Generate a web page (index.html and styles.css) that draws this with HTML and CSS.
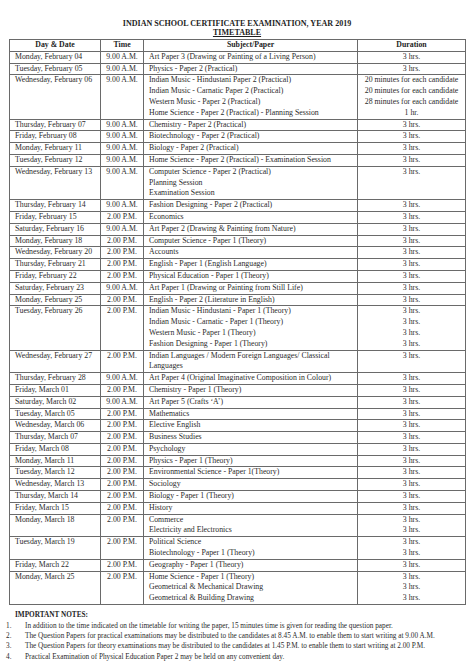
FILE: index.html
```html
<!DOCTYPE html>
<html>
<head>
<meta charset="utf-8">
<link rel="stylesheet" href="styles.css">
</head>
<body>
<div class="page">
  <div class="title">INDIAN SCHOOL CERTIFICATE EXAMINATION, YEAR 2019</div>
  <div class="subtitle"><span>TIMETABLE</span></div>
  <table class="tt">
    <colgroup><col class="c1"><col class="c2"><col class="c3"><col class="c4"></colgroup>
    <thead>
      <tr><th>Day &amp; Date</th><th>Time</th><th>Subject/Paper</th><th>Duration</th></tr>
    </thead>
    <tbody>
      <tr><td>Monday, February 04</td><td class="t">9.00 A.M.</td><td>Art Paper 3 (Drawing or Painting of a Living Person)</td><td class="d">3 hrs.</td></tr>
      <tr><td>Tuesday, February 05</td><td class="t">9.00 A.M.</td><td>Physics - Paper 2 (Practical)</td><td class="d">3 hrs.</td></tr>
      <tr><td>Wednesday, February 06</td><td class="t">9.00 A.M.</td><td><div>Indian Music - Hindustani Paper 2 (Practical)</div><div>Indian Music - Carnatic Paper 2 (Practical)</div><div>Western Music - Paper 2 (Practical)</div><div>Home Science - Paper 2 (Practical) - Planning Session</div></td><td class="d"><div>20 minutes for each candidate</div><div>20 minutes for each candidate</div><div>28 minutes for each candidate</div><div>1 hr.</div></td></tr>
      <tr><td>Thursday, February 07</td><td class="t">9.00 A.M.</td><td>Chemistry - Paper 2 (Practical)</td><td class="d">3 hrs.</td></tr>
      <tr><td>Friday, February 08</td><td class="t">9.00 A.M.</td><td>Biotechnology - Paper 2 (Practical)</td><td class="d">3 hrs.</td></tr>
      <tr><td>Monday, February 11</td><td class="t">9.00 A.M.</td><td>Biology - Paper 2 (Practical)</td><td class="d">3 hrs.</td></tr>
      <tr><td>Tuesday, February 12</td><td class="t">9.00 A.M.</td><td>Home Science - Paper 2 (Practical) - Examination Session</td><td class="d">3 hrs.</td></tr>
      <tr><td>Wednesday, February 13</td><td class="t">9.00 A.M.</td><td><div>Computer Science - Paper 2 (Practical)</div><div>Planning Session</div><div>Examination Session</div></td><td class="d">3 hrs.</td></tr>
      <tr><td>Thursday, February 14</td><td class="t">9.00 A.M.</td><td>Fashion Designing - Paper 2 (Practical)</td><td class="d">3 hrs.</td></tr>
      <tr><td>Friday, February 15</td><td class="t">2.00 P.M.</td><td>Economics</td><td class="d">3 hrs.</td></tr>
      <tr><td>Saturday, February 16</td><td class="t">9.00 A.M.</td><td>Art Paper 2 (Drawing &amp; Painting from Nature)</td><td class="d">3 hrs.</td></tr>
      <tr><td>Monday, February 18</td><td class="t">2.00 P.M.</td><td>Computer Science - Paper 1 (Theory)</td><td class="d">3 hrs.</td></tr>
      <tr><td>Wednesday, February 20</td><td class="t">2.00 P.M.</td><td>Accounts</td><td class="d">3 hrs.</td></tr>
      <tr><td>Thursday, February 21</td><td class="t">2.00 P.M.</td><td>English - Paper 1 (English Language)</td><td class="d">3 hrs.</td></tr>
      <tr><td>Friday, February 22</td><td class="t">2.00 P.M.</td><td>Physical Education - Paper 1 (Theory)</td><td class="d">3 hrs.</td></tr>
      <tr><td>Saturday, February 23</td><td class="t">9.00 A.M.</td><td>Art Paper 1 (Drawing or Painting from Still Life)</td><td class="d">3 hrs.</td></tr>
      <tr><td>Monday, February 25</td><td class="t">2.00 P.M.</td><td>English - Paper 2 (Literature in English)</td><td class="d">3 hrs.</td></tr>
      <tr><td>Tuesday, February 26</td><td class="t">2.00 P.M.</td><td><div>Indian Music - Hindustani - Paper 1 (Theory)</div><div>Indian Music - Carnatic - Paper 1 (Theory)</div><div>Western Music - Paper 1 (Theory)</div><div>Fashion Designing - Paper 1 (Theory)</div></td><td class="d"><div>3 hrs.</div><div>3 hrs.</div><div>3 hrs.</div><div>3 hrs.</div></td></tr>
      <tr><td>Wednesday, February 27</td><td class="t">2.00 P.M.</td><td><div>Indian Languages / Modern Foreign Languages/ Classical</div><div>Languages</div></td><td class="d">3 hrs.</td></tr>
      <tr><td>Thursday, February 28</td><td class="t">9.00 A.M.</td><td>Art Paper 4 (Original Imaginative Composition in Colour)</td><td class="d">3 hrs.</td></tr>
      <tr><td>Friday, March 01</td><td class="t">2.00 P.M.</td><td>Chemistry - Paper 1 (Theory)</td><td class="d">3 hrs.</td></tr>
      <tr><td>Saturday, March 02</td><td class="t">9.00 A.M.</td><td>Art Paper 5 (Crafts ‘A’)</td><td class="d">3 hrs.</td></tr>
      <tr><td>Tuesday, March 05</td><td class="t">2.00 P.M.</td><td>Mathematics</td><td class="d">3 hrs.</td></tr>
      <tr><td>Wednesday, March 06</td><td class="t">2.00 P.M.</td><td>Elective English</td><td class="d">3 hrs.</td></tr>
      <tr><td>Thursday, March 07</td><td class="t">2.00 P.M.</td><td>Business Studies</td><td class="d">3 hrs.</td></tr>
      <tr><td>Friday, March 08</td><td class="t">2.00 P.M.</td><td>Psychology</td><td class="d">3 hrs.</td></tr>
      <tr><td>Monday, March 11</td><td class="t">2.00 P.M.</td><td>Physics - Paper 1 (Theory)</td><td class="d">3 hrs.</td></tr>
      <tr><td>Tuesday, March 12</td><td class="t">2.00 P.M.</td><td>Environmental Science - Paper 1(Theory)</td><td class="d">3 hrs.</td></tr>
      <tr><td>Wednesday, March 13</td><td class="t">2.00 P.M.</td><td>Sociology</td><td class="d">3 hrs.</td></tr>
      <tr><td>Thursday, March 14</td><td class="t">2.00 P.M.</td><td>Biology - Paper 1 (Theory)</td><td class="d">3 hrs.</td></tr>
      <tr><td>Friday, March 15</td><td class="t">2.00 P.M.</td><td>History</td><td class="d">3 hrs.</td></tr>
      <tr><td>Monday, March 18</td><td class="t">2.00 P.M.</td><td><div>Commerce</div><div>Electricity and Electronics</div></td><td class="d"><div>3 hrs.</div><div>3 hrs.</div></td></tr>
      <tr><td>Tuesday, March 19</td><td class="t">2.00 P.M.</td><td><div>Political Science</div><div>Biotechnology - Paper 1 (Theory)</div></td><td class="d"><div>3 hrs.</div><div>3 hrs.</div></td></tr>
      <tr><td>Friday, March 22</td><td class="t">2.00 P.M.</td><td>Geography - Paper 1 (Theory)</td><td class="d">3 hrs.</td></tr>
      <tr><td>Monday, March 25</td><td class="t">2.00 P.M.</td><td><div>Home Science - Paper 1 (Theory)</div><div>Geometrical &amp; Mechanical Drawing</div><div>Geometrical &amp; Building Drawing</div></td><td class="d"><div>3 hrs.</div><div>3 hrs.</div><div>3 hrs.</div></td></tr>
    </tbody>
  </table>
  <div class="notes">
    <div class="notes-title">IMPORTANT NOTES:</div>
    <div class="note"><span class="num">1.</span><span>In addition to the time indicated on the timetable for writing the paper, 15 minutes time is given for reading the question paper.</span></div>
    <div class="note"><span class="num">2.</span><span>The Question Papers for practical examinations may be distributed to the candidates at 8.45 A.M. to enable them to start writing at 9.00 A.M.</span></div>
    <div class="note"><span class="num">3.</span><span>The Question Papers for theory examinations may be distributed to the candidates at 1.45 P.M. to enable them to start writing at 2.00 P.M.</span></div>
    <div class="note"><span class="num">4.</span><span>Practical Examination of Physical Education Paper 2 may be held on any convenient day.</span></div>
  </div>
</div>
</body>
</html>
```

FILE: styles.css
```css
html, body {
  margin: 0;
  padding: 0;
  background: #ffffff;
}
body {
  font-family: "Liberation Serif", "Times New Roman", serif;
  color: #2b2b2b;
}
.page {
  width: 474px;
  padding: 19px 9px 0;
  box-sizing: border-box;
}
.title, .subtitle {
  text-align: center;
  font-weight: bold;
  font-size: 8.05px;
  line-height: 9px;
  color: #1e1e1e;
}
.subtitle span {
  text-decoration: underline;
}
.tt {
  width: 456px;
  margin-top: 2px;
  border-collapse: collapse;
  table-layout: fixed;
  font-size: 7.8px;
  line-height: 10.8px;
  border: 1px solid #3a3a3a;
}
.c1 { width: 91px; }
.c2 { width: 43px; }
.c3 { width: 214px; }
.c4 { width: 108px; }
.tt th, .tt td {
  border: 1px solid #6a6a6a;
  padding: 0 5px;
  vertical-align: top;
  text-align: left;
  white-space: nowrap;
  overflow: hidden;
}
.tt th {
  text-align: center;
  font-weight: bold;
  color: #1e1e1e;
}
.tt td.t, .tt td.d {
  text-align: center;
  padding: 0 2px;
}
.notes {
  margin-top: 5px;
  margin-left: -3px;
  font-size: 7.25px;
  line-height: 10.3px;
}
.notes-title {
  font-weight: bold;
  color: #1e1e1e;
  padding-left: 9px;
  margin-bottom: 0.5px;
}
.note {
  display: flex;
}
.note .num {
  width: 19px;
  flex: none;
}
```
